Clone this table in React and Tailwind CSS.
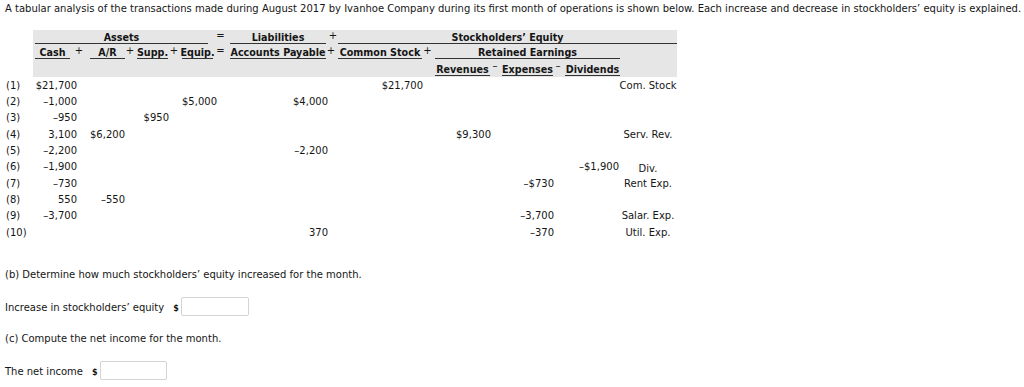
import React from 'react';

// header column widths (px), starting at x=33
const headCols =
  'grid-cols-[37px_18px_37px_10px_33px_12px_33px_15px_98px_10px_86px_11px_57px_10px_53px_10px_57px_57px]';

const dataCols =
  'grid-cols-[35px_42px_48px_44px_48px_111px_95px_68px_63px_65px_58px]';

const rows = [
  ['(1)', '$21,700', '', '', '', '', '$21,700', '', '', '', 'Com. Stock'],
  ['(2)', '–1,000', '', '', '$5,000', '$4,000', '', '', '', '', ''],
  ['(3)', '–950', '', '$950', '', '', '', '', '', '', ''],
  ['(4)', '3,100', '$6,200', '', '', '', '', '$9,300', '', '', 'Serv. Rev.'],
  ['(5)', '–2,200', '', '', '', '–2,200', '', '', '', '', ''],
  ['(6)', '–1,900', '', '', '', '', '', '', '', '–$1,900', 'Div.'],
  ['(7)', '–730', '', '', '', '', '', '', '–$730', '', 'Rent Exp.'],
  ['(8)', '550', '–550', '', '', '', '', '', '', '', ''],
  ['(9)', '–3,700', '', '', '', '', '', '', '–3,700', '', 'Salar. Exp.'],
  ['(10)', '', '', '', '', '370', '', '', '–370', '', 'Util. Exp.'],
];

function Head({ children, className = '' }) {
  return (
    <div className={`flex items-end justify-center ml-[2px] border-b border-[#333] font-bold text-[9.6px] whitespace-nowrap ${className}`}>
      {children}
    </div>
  );
}

function Op({ children, className = '' }) {
  return <div className={`flex justify-center items-end pb-[3px] whitespace-nowrap ${className}`}>{children}</div>;
}

function MoneyInput({ w }) {
  return (
    <div className="flex items-end gap-[2px]">
      <span className="text-[8px] font-bold leading-[10px] pb-[2px]">$</span>
      <div className={`${w} h-[19px] bg-white border border-[#d4d4d4] rounded-[2px]`} />
    </div>
  );
}

export default function App() {
  return (
    <div className="w-[1024px] h-[387px] bg-white text-[#151515] font-['DejaVu_Sans',sans-serif] text-[10px] leading-[11px] overflow-hidden">
      <p className="pl-[5px] pt-[3px] whitespace-nowrap">
        A tabular analysis of the transactions made during August 2017 by Ivanhoe Company during its first month of operations is shown below. Each increase and decrease in stockholders’ equity is explained.
      </p>

      {/* header */}
      <div className="mt-[16px] ml-[33px] w-[644px] h-[47px] bg-[#e6e6e6] flex flex-col">
        <div className={`grid ${headCols} h-[12px]`}>
          <Head className="col-span-7 mr-[5px]">Assets</Head>
          <Op className="pb-[1px]">=</Op>
          <Head>Liabilities</Head>
          <Op className="pb-[2px] pl-[4px]">+</Op>
          <Head className="col-span-8">Stockholders’ Equity</Head>
        </div>
        <div className={`grid ${headCols} h-[17px]`}>
          <Head>Cash</Head>
          <Op>+</Op>
          <Head>A/R</Head>
          <Op>+</Op>
          <Head>Supp.</Head>
          <Op>+</Op>
          <Head>Equip.</Head>
          <Op className="pb-[1px]">=</Op>
          <Head>Accounts Payable</Head>
          <Op>+</Op>
          <Head>Common Stock</Head>
          <Op>+</Op>
          <Head className="col-span-5">Retained Earnings</Head>
          <div />
        </div>
        <div className={`grid ${headCols} h-[17px]`}>
          <div className="col-span-12" />
          <Head>Revenues</Head>
          <Op className="pb-[5px]">–</Op>
          <Head>Expenses</Head>
          <Op className="pb-[5px]">–</Op>
          <Head>Dividends</Head>
          <div />
        </div>
      </div>

      {/* transactions */}
      <div className={`grid ${dataCols} auto-rows-[16.33px] w-[677px]`}>
        {rows.map((r, i) =>
          r.map((cell, j) => (
            <div
              key={`${i}-${j}`}
              className={`flex items-center whitespace-nowrap ${
                j === 0 ? 'pl-[6px]' : j === 10 ? 'justify-center' : 'justify-end'
              } ${j === 10 && cell === 'Div.' ? 'pt-[4px]' : ''}`}
            >
              {cell}
            </div>
          ))
        )}
      </div>

      <div className="pl-[5px] flex flex-col">
        <p className="mt-[29px] whitespace-nowrap">(b) Determine how much stockholders’ equity increased for the month.</p>
        <div className="mt-[17px] flex items-center gap-[9px]">
          <span className="whitespace-nowrap pt-[1px]">Increase in stockholders’ equity</span>
          <MoneyInput w="w-[68px]" />
        </div>
        <p className="mt-[17px] whitespace-nowrap">(c) Compute the net income for the month.</p>
        <div className="mt-[17px] flex items-center gap-[9px]">
          <span className="whitespace-nowrap pt-[1px]">The net income</span>
          <MoneyInput w="w-[67px]" />
        </div>
      </div>
    </div>
  );
}
